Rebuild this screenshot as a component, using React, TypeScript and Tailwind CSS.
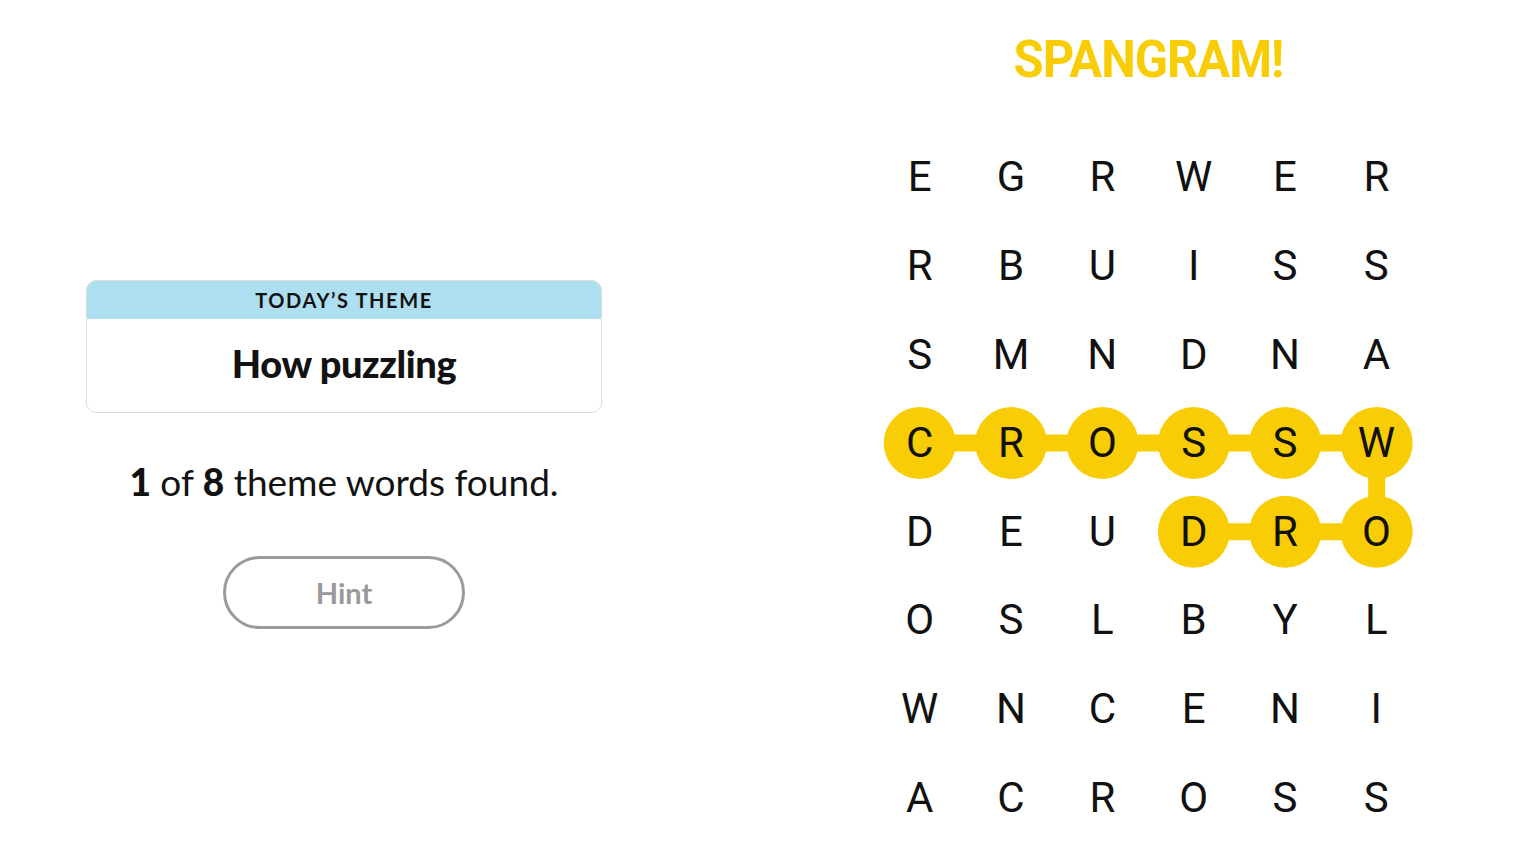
import React from "react";

const GRID = [
  "EGRWER",
  "RBUISS",
  "SMNDNA",
  "CROSSW",
  "DEUDRO",
  "OSLBYL",
  "WNCENI",
  "ACROSS",
];

const CELL_W = 91.4;
const CELL_H = 88.6;

// spangram path, [row, col]
const PATH: [number, number][] = [
  [3, 0],
  [3, 1],
  [3, 2],
  [3, 3],
  [3, 4],
  [3, 5],
  [4, 5],
  [4, 4],
  [4, 3],
];

const cx = (c: number) => CELL_W / 2 + CELL_W * c;
const cy = (r: number) => CELL_H / 2 + CELL_H * r;

function Board() {
  return (
    <div className="relative h-[709px] w-[548px]">
      <svg className="absolute inset-0" width={548} height={709}>
        {PATH.slice(1).map(([r, c], i) => {
          const [pr, pc] = PATH[i];
          return (
            <line
              key={i}
              x1={cx(pc)}
              y1={cy(pr)}
              x2={cx(c)}
              y2={cy(r)}
              stroke="#f8cd05"
              strokeWidth={17}
            />
          );
        })}
        {PATH.map(([r, c], i) => (
          <circle key={i} cx={cx(c)} cy={cy(r)} r={36} fill="#f8cd05" />
        ))}
      </svg>
      <div className="relative grid h-full grid-cols-6 grid-rows-8">
        {GRID.map((row, r) =>
          row.split("").map((ch, c) => (
            <div
              key={`${r}-${c}`}
              className="flex items-center justify-center text-[42px] leading-none text-[#111] font-['Roboto',sans-serif]"
            >
              {ch}
            </div>
          )),
        )}
      </div>
    </div>
  );
}

export default function App() {
  return (
    <div className="flex h-[864px] w-[1536px] bg-white">
      <div className="flex w-[688px] flex-col items-center pt-[280px] font-['Lato',sans-serif]">
        <div className="w-[516px] overflow-hidden rounded-[10px] border border-[#dcdcdc]">
          <div className="flex h-[38px] items-center justify-center bg-[#aedff0] text-[20px] font-bold tracking-[0.08em] text-[#121212]">
            TODAY’S THEME
          </div>
          <div className="flex h-[93px] items-center justify-center pb-[4px] text-[38px] font-black tracking-[-0.01em] text-[#121212]">
            How puzzling
          </div>
        </div>
        <p className="mt-[50px] text-[37px] leading-none text-[#121212]">
          <span className="font-black">1</span> of{" "}
          <span className="font-black">8</span> theme words found.
        </p>
        <button className="mt-[56px] flex h-[73px] w-[242px] items-center justify-center rounded-full border-[3px] border-[#9b9b9b] bg-white text-[29px] font-bold text-[#999]">
          Hint
        </button>
      </div>
      <div className="flex flex-col pl-[186px]">
        <div className="flex h-[133px] w-[548px] justify-center pt-[34px]">
          <span className="inline-block scale-x-[0.94] text-[52px] font-bold leading-none tracking-[-0.02em] text-[#f8cd05] font-['Roboto',sans-serif]">
            SPANGRAM!
          </span>
        </div>
        <Board />
      </div>
    </div>
  );
}
